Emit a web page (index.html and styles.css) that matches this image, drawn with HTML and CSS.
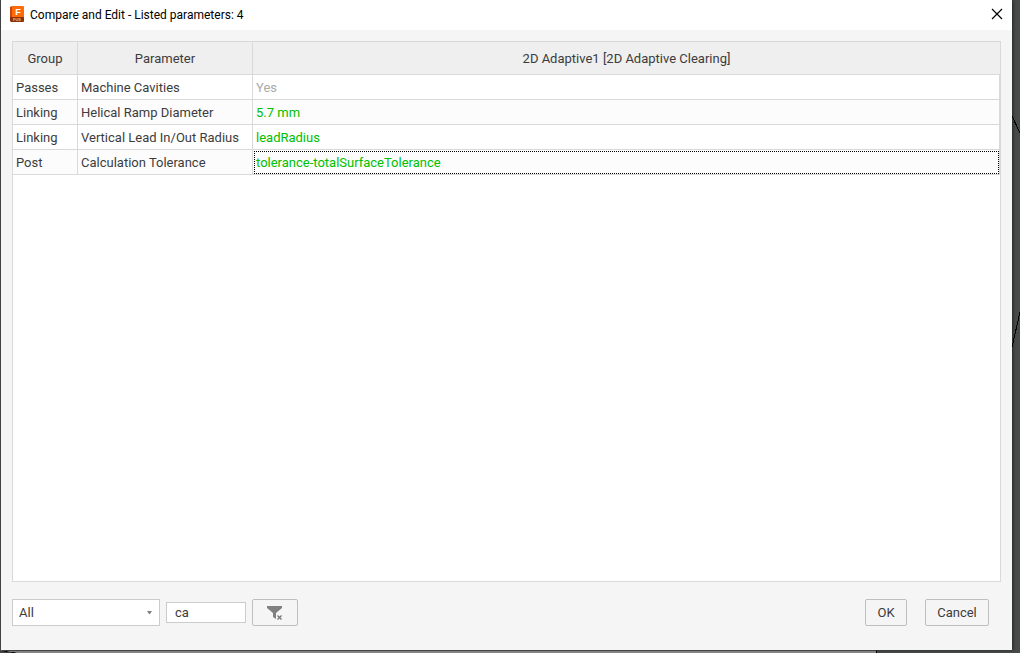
FILE: index.html
```html
<!DOCTYPE html>
<html lang="en">
    <head>
        <meta charset="utf-8">
        <title>Compare and Edit</title>
        <link rel="stylesheet" href="styles.css">
    </head>
    <body>
        <!-- model edges visible behind the dialog -->
        <svg class="edges edges-right" width="8" height="360" viewBox="0 0 8 360" shape-rendering="crispEdges" aria-hidden="true">
            <path d="M0 116L8 133M8 312L0 347" fill="none" stroke="#000"/>
        </svg>
        <div class="canvas-strip" aria-hidden="true"></div>
        <main class="dialog">
            <header class="titlebar">
                <svg class="logo" width="16" height="18" viewBox="0 0 16 18" aria-hidden="true">
                    <path d="M1 2L3 1V16L1 15z" fill="#c8480c"/>
                    <path d="M3 1H14Q15 1 15 2V12H3z" fill="#ff6b0a"/>
                    <path d="M1 12H15V16Q15 17 14 17H2L1 16z" fill="#8a3208"/>
                    <text x="9" y="10" class="logo-letter">F</text>
                    <text x="8" y="16" class="logo-tag">FUS</text>
                </svg>
                <h1>Compare and Edit - Listed parameters: 4</h1>
                <button class="close" aria-label="Close">
                    <svg width="12" height="12" viewBox="0 0 12 12"><path d="M1 1L11 11M11 1L1 11" fill="none" stroke="#000" stroke-width="1.2"/></svg>
                </button>
            </header>
            <section class="grid">
                <table>
                    <colgroup>
                        <col class="col-group">
                        <col class="col-parameter">
                        <col>
                    </colgroup>
                    <thead>
                        <tr><th>Group</th><th>Parameter</th><th>2D Adaptive1 [2D Adaptive Clearing]</th></tr>
                    </thead>
                    <tbody>
                        <tr><td>Passes</td><td>Machine Cavities</td><td class="default">Yes</td></tr>
                        <tr><td>Linking</td><td>Helical Ramp Diameter</td><td class="edited">5.7 mm</td></tr>
                        <tr><td>Linking</td><td>Vertical Lead In/Out Radius</td><td class="edited">leadRadius</td></tr>
                        <tr><td>Post</td><td>Calculation Tolerance</td><td class="edited current">tolerance-totalSurfaceTolerance</td></tr>
                    </tbody>
                </table>
            </section>
            <footer class="toolbar">
                <div class="select">
                    <select aria-label="Show">
                        <option>All</option>
                    </select>
                    <svg class="arrow" width="5" height="3" viewBox="0 0 5 3" aria-hidden="true"><path d="M0 0H5L3 3H2z" fill="#808080"/></svg>
                </div>
                <input class="filter" type="text" value="ca" aria-label="Filter">
                <button class="clear" aria-label="Clear filter">
                    <svg width="16" height="16" viewBox="0 0 16 16">
                        <path d="M0 1H15V3L9 8V14L6 12V8L0 3z" fill="#808080"/>
                        <path d="M9 9H16V16H9z" fill="#f5f5f5"/>
                        <path d="M10.500 10.500L14.500 14.500M14.500 10.500L10.500 14.500" fill="none" stroke="#777" stroke-width="1.300"/>
                    </svg>
                </button>
                <div class="actions">
                    <button class="ok">OK</button>
                    <button class="cancel">Cancel</button>
                </div>
            </footer>
        </main>
    </body>
</html>
```
FILE: styles.css
```css
* {
    box-sizing: border-box;
}
body {
    margin: 0;
    padding: 0 8px 3px 1px;
    min-height: 100vh;
    display: flex;
    position: relative;
    background: #484a49;
    color: #3c3c3c;
    font: 13px/16px Roboto, "Liberation Sans", sans-serif;
}
button, input, select {
    font: inherit;
    color: inherit;
}
.edges {
    position: absolute;
}
.edges-right {
    top: 0;
    right: 0;
}
.canvas-strip {
    position: absolute;
    left: 0;
    bottom: 0;
    width: 86%;
    height: 3px;
    background: #8b8b8b;
    border-top: 1px solid #555;
    border-right: 1px solid #000;
}
.canvas-strip::before {
    content: "";
    position: absolute;
    left: 0;
    bottom: 0;
    width: 20px;
    height: 2px;
    background: linear-gradient(8deg, #444 40%, #000 50%, #8b8b8b 60%);
}
.dialog {
    flex: 1;
    display: flex;
    flex-direction: column;
    background: #f5f5f5;
    box-shadow: 1px 0 3px rgba(0, 0, 0, .5);
    position: relative;
}
.titlebar {
    display: flex;
    align-items: center;
    height: 30px;
    padding: 0 9px 0 8px;
    background: #fff;
    color: #000;
}
.titlebar h1 {
    margin: 0 auto 0 5px;
    font-size: 12px;
    font-weight: normal;
}
.logo {
    margin-bottom: 2px;
}
.logo-letter {
    font: bold 9px "Liberation Sans", sans-serif;
    text-anchor: middle;
    fill: #fff;
}
.logo-tag {
    font: bold 4px "Liberation Sans", sans-serif;
    text-anchor: middle;
    fill: #eeb898;
}
.close {
    display: flex;
    margin-bottom: 2px;
    padding: 0;
    border: 0;
    background: none;
}
.grid {
    flex: 1;
    margin: 11px 11px 0;
    border: 1px solid #d9d9d9;
    background: #fff;
}
table {
    width: 100%;
    table-layout: fixed;
    border-collapse: separate;
    border-spacing: 0;
}
.col-group {
    width: 65px;
}
.col-parameter {
    width: 175px;
}
th, td {
    border: solid #d9d9d9;
    border-width: 0 1px 1px 0;
    white-space: nowrap;
}
th {
    height: 33px;
    padding: 2px 0 0;
    background: #efefef;
    font-weight: normal;
}
th:last-child {
    border-right: 0;
}
td {
    height: 25px;
    padding: 2px 3px 0;
}
tbody tr:nth-child(even) {
    background: #fcfcfc;
}
.default {
    color: #aaa;
}
.edited {
    color: #00c000;
}
.current {
    outline: 1px dotted #000;
    outline-offset: -2px;
}
.toolbar {
    display: flex;
    align-items: center;
    gap: 6px;
    padding: 17px 23px 24px 11px;
}
.select {
    position: relative;
    width: 148px;
}
.select select {
    display: block;
    width: 100%;
    height: 27px;
    padding: 0 6px;
    border: 1px solid #ccc;
    border-radius: 0;
    background: #fff;
    appearance: none;
}
.arrow {
    position: absolute;
    top: 12px;
    right: 8px;
}
.filter {
    width: 80px;
    height: 21px;
    padding: 0 8px;
    border: 1px solid #ccc;
    background: #fff;
}
.toolbar button {
    display: flex;
    align-items: center;
    justify-content: center;
    height: 27px;
    padding: 0;
    border: 1px solid #bfbfbf;
    border-radius: 2px;
    background: #f5f5f5;
}
.toolbar .clear {
    width: 46px;
}
.actions {
    display: flex;
    gap: 18px;
    margin-left: auto;
}
.toolbar .ok {
    width: 42px;
}
.toolbar .cancel {
    width: 64px;
}
```
